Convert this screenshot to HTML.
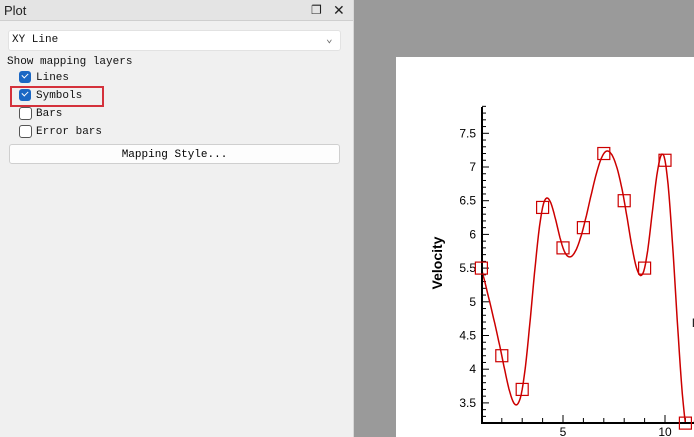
<!DOCTYPE html><html><head><style>
body{margin:0;width:694px;height:437px;overflow:hidden;background:#9a9a9a;position:relative;font-family:"Liberation Mono","Noto Sans CJK SC",monospace;}
#panel{position:absolute;left:0;top:0;width:353px;height:437px;background:#f0f0f0;border-right:1px solid #d8d8d8}
#tb{height:20px;background:#e4e4e4;border-bottom:1px solid #cfcfcf;font:13px "Liberation Sans",sans-serif;line-height:21px;padding-left:4px;color:#222}
.a{position:absolute;font-size:11px;color:#111}
.cb{position:absolute;left:19px;width:12px;height:12px;border-radius:3px}
.on{background:#1a67c4}
.off{border:1px solid #555;width:11px;height:11px;background:#fff}
.on:after{content:"";position:absolute;left:3px;top:2px;width:5px;height:3px;border-left:1.3px solid #fff;border-bottom:1.3px solid #fff;transform:rotate(-45deg)}
</style></head><body>
<div id="panel">
<div id="tb">Plot<span style="position:absolute;left:311px;top:0;font-size:12px">&#x2750;</span><span style="position:absolute;left:333px;top:0;font-size:14px">✕</span></div>
<div style="position:absolute;left:8px;top:30px;width:331px;height:19px;background:#fff;border:1px solid #e2e2e2;border-radius:3px"></div>
<div class="a" style="left:12px;top:34px">XY Line</div>
<div class="a" style="left:326px;top:32px;color:#666">⌄</div>
<div class="a" style="left:7px;top:56px">Show mapping layers</div>
<div class="cb on" style="top:71px"></div><div class="a" style="left:36px;top:72px">Lines</div>
<div class="cb on" style="top:89px"></div><div class="a" style="left:36px;top:90px">Symbols</div>
<div class="cb off" style="top:107px"></div><div class="a" style="left:36px;top:108px">Bars</div>
<div class="cb off" style="top:125px"></div><div class="a" style="left:36px;top:126px">Error bars</div>
<div style="position:absolute;left:10px;top:86px;width:90px;height:17px;border:2px solid #d4313b"></div>
<div style="position:absolute;left:9px;top:144px;width:329px;height:18px;background:#fdfdfd;border:1px solid #cfcfcf;border-radius:3px;font-size:11px;text-align:center;line-height:20px">Mapping Style...</div>
</div>
<div style="position:absolute;left:396px;top:57px;width:298px;height:380px;background:#fff"></div>
<svg id="s" width="694" height="437" style="position:absolute;left:0;top:0" font-family="Liberation Sans,sans-serif" font-size="12"></svg>
<div style="position:absolute;left:407px;top:255px;transform:rotate(-90deg);transform-origin:center;font:bold 14px 'Liberation Sans',sans-serif;width:60px;text-align:center">Velocity</div>
<script>
var s=document.getElementById('s'),h='';
function X(u){return 563+(u-5)*20.4}function Y(v){return 167-(v-7)*67.4}
h+='<line x1="482" y1="107" x2="482" y2="423.5" stroke="#000" stroke-width="2"/><line x1="481" y1="423" x2="694" y2="423" stroke="#000" stroke-width="2"/>';
for(var v=3.2;v<=7.91;v+=0.1){var y=Y(v),m=Math.abs(v*2-Math.round(v*2))<0.01;h+='<line x1="482" x2="'+(m?489:486)+'" y1="'+y+'" y2="'+y+'" stroke="#000"/>';}
for(var v=3.5;v<=7.6;v+=0.5){h+='<text x="476" y="'+(Y(v)+4)+'" text-anchor="end">'+(+v.toFixed(1))+'</text>';}
for(var u=2;u<=11;u++){var x=X(u);h+='<line x1="'+x+'" x2="'+x+'" y1="423" y2="'+(u%5?418:415)+'" stroke="#000"/>';}
h+='<text x="563" y="436" text-anchor="middle">5</text><text x="665" y="436" text-anchor="middle">10</text><text x="692" y="327">l</text>';
var ys=[5.5,4.2,3.7,6.4,5.8,6.1,7.2,6.5,5.5,7.1,3.2,4.5,5.5];var n=ys.length;
// natural cubic spline, h=1
var M=new Array(n).fill(0),c=[],dd=[];var a=[],b=[],cc=[],r=[];
for(var i=1;i<n-1;i++){a[i]=1;b[i]=4;cc[i]=1;r[i]=6*(ys[i+1]-2*ys[i]+ys[i-1]);}
var cp=[],dp=[];cp[1]=cc[1]/b[1];dp[1]=r[1]/b[1];
for(var i=2;i<n-1;i++){var den=b[i]-a[i]*cp[i-1];cp[i]=cc[i]/den;dp[i]=(r[i]-a[i]*dp[i-1])/den;}
M[n-2]=dp[n-2];for(var i=n-3;i>=1;i--)M[i]=dp[i]-cp[i]*M[i+1];
var d='';
for(var i=0;i<n-1;i++){for(var k=0;k<=20;k++){var t=k/20,A=1-t,B=t;
var yv=A*ys[i]+B*ys[i+1]+((A*A*A-A)*M[i]+(B*B*B-B)*M[i+1])/6;
d+=(d?'L':'M')+X(1+i+t).toFixed(1)+','+Y(yv).toFixed(1);}}
h+='<clipPath id="c"><rect x="483" y="100" width="220" height="322"/></clipPath>';
h+='<path clip-path="url(#c)" d="'+d+'" fill="none" stroke="#c00" stroke-width="1.5"/>';
[[1,5.5],[2,4.2],[3,3.7],[4,6.4],[5,5.8],[6,6.1],[7,7.2],[8,6.5],[9,5.5],[10,7.1],[11,3.2]].forEach(function(q){h+='<rect x="'+(X(q[0])-6)+'" y="'+(Y(q[1])-6)+'" width="12" height="12" fill="none" stroke="#c00" stroke-width="1.2"/>'});
s.innerHTML=h;
</script>
</body></html>
